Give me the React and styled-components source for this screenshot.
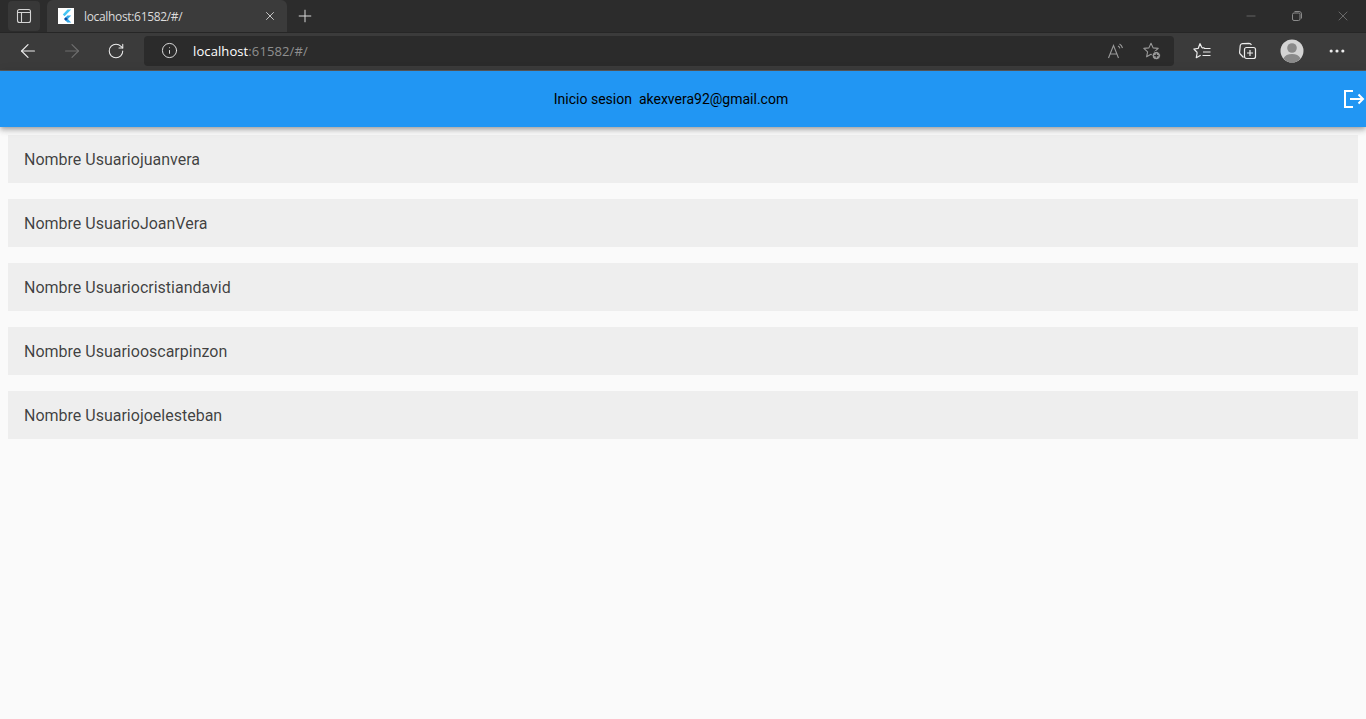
import React from 'react';
import styled, { createGlobalStyle } from 'styled-components';
import { X, Plus, Minus, ArrowLeft, ArrowRight, RotateCw, Info, MoreHorizontal } from 'lucide-react';

const Global = createGlobalStyle`
  html, body { margin: 0; padding: 0; height: 100%; background: #fafafa; overflow: hidden; }
  #root { height: 719px; }
  * { box-sizing: border-box; }
`;
const Page = styled.div`
  display: flex; flex-direction: column; width: 1366px; height: 719px; background: #fafafa;
  font-family: Roboto, sans-serif;
`;
const TitleBar = styled.div`
  display: flex; align-items: flex-end; height: 32px; background: #2c2c2c; padding-left: 8px; color: #ccc;
`;
const TabSwitch = styled.div`
  display: flex; align-items: center; justify-content: center; width: 32px; height: 30px; margin-bottom: 1px;
  background: #383838; border-radius: 4px;
`;
const Tab = styled.div`
  display: flex; align-items: center; width: 240px; height: 32px; margin-left: 7px; padding-left: 11px;
  background: #3b3b3b; border-radius: 6px 6px 0 0;
`;
const Favicon = styled.div`
  display: flex; align-items: center; justify-content: center; width: 16px; height: 16px; background: #fff; flex: none;
`;
const TabTitle = styled.span`
  margin-left: 10px; font: 12px "Open Sans", sans-serif; letter-spacing: -0.33px; color: #dcdcdc; flex: 1; white-space: nowrap;
`;
const TabClose = styled.div`display: flex; margin-right: 10px; color: #d0d0d0;`;
const NewTab = styled.div`display: flex; margin-left: 8px; color: #d8d8d8;`;
const WindowButtons = styled.div`
  display: flex; align-items: center; margin-left: auto; height: 32px; color: #8a8a8a;
`;
const WindowButton = styled.div`
  display: flex; align-items: center; justify-content: center; width: 46px; height: 32px;
`;
const NavBar = styled.div`
  display: flex; align-items: center; height: 38px; background: #3b3b3b; padding: 0 0 2px 10px;
  border-top: 1px solid #262626;
`;
const NavButton = styled.div`
  display: flex; align-items: center; justify-content: center; width: 36px; height: 32px; margin-right: 8px;
  color: ${p => (p.$dim ? '#6e6e6e' : '#ececec')};
`;
const AddressBar = styled.div`
  display: flex; align-items: center; width: 1030px; height: 30px; margin-left: 2px; padding: 0 4px 0 17px;
  background: #2b2b2b; border-radius: 4px; color: #e8e8e8;
`;
const Url = styled.span`
  margin-left: 15px; font: 13px "Open Sans", sans-serif; letter-spacing: 0.1px; color: #8f8f8f; flex: 1;
  b { font-weight: 400; color: #fff; }
`;
const AddressIcon = styled.div`
  display: flex; align-items: center; justify-content: center; width: 36px; color: #9a9a9a;
`;
const Tools = styled.div`display: flex; align-items: center; margin-left: 5px; color: #ececec;`;
const Tool = styled.div`display: flex; align-items: center; justify-content: center; width: 45px; height: 32px;`;
const Shade = styled.div`height: 1px; background: #5a5a5a;`;
const AppBar = styled.header`
  position: relative; z-index: 1; display: flex; align-items: center; height: 56px;
  background: #2196f3; color: #000; font-size: 14px;
  box-shadow: 0 2px 4px -1px rgba(0,0,0,.2), 0 4px 5px 0 rgba(0,0,0,.14), 0 1px 10px 0 rgba(0,0,0,.12);
`;
const AppTitle = styled.div`
  flex: 1; text-align: center; white-space: pre;
`;
const Logout = styled.div`
  display: flex; width: 24px; height: 24px; flex: none;
`;
const List = styled.main`
  display: flex; flex-direction: column; gap: 16px; padding: 8px;
`;
const Row = styled.div`
  display: flex; align-items: center; height: 48px; padding: 0 16px; background: #eeeeee;
  color: rgba(0,0,0,.74); font-size: 16px;
`;

const users = ['juanvera', 'JoanVera', 'cristiandavid', 'oscarpinzon', 'joelesteban'];

export default function App() {
  return (
    <Page>
      <Global />
      <TitleBar>
        <TabSwitch>
          <svg width="16" height="16" viewBox="0 0 16 16" fill="none" stroke="#d4d4d4" strokeWidth="1.1">
            <rect x="1.5" y="1.5" width="13" height="13" rx="2" />
            <path d="M1.5 4.5h13M5.5 4.5v10" />
          </svg>
        </TabSwitch>
        <Tab>
          <Favicon>
            <svg width="12" height="14" viewBox="0 0 12 14">
              <path d="M7.5 0.5h3.7L4.6 7.2 2.8 5.4z" fill="#45c5f3" />
              <path d="M7.4 6.5h3.8L7.9 9.9l3.3 3.6H7.4L4.1 9.9z" fill="#35a9e8" />
              <path d="M5.8 8.2l1.9 1.8-1.9 1.7-1.7-1.8z" fill="#0d47a1" />
            </svg>
          </Favicon>
          <TabTitle>localhost:61582/#/</TabTitle>
          <TabClose><X size={14} strokeWidth={1.6} /></TabClose>
        </Tab>
        <NewTab><Plus size={20} strokeWidth={1.2} style={{ marginBottom: 6 }} /></NewTab>
        <WindowButtons>
          <WindowButton><Minus size={14} strokeWidth={1} /></WindowButton>
          <WindowButton>
            <svg width="12" height="12" viewBox="0 0 12 12" fill="none" stroke="#8a8a8a">
              <rect x="1.5" y="3" width="7.5" height="7.5" rx="1.5" />
              <path d="M3.5 1.5h4.5a2.5 2.5 0 0 1 2.5 2.5v4.5" />
            </svg>
          </WindowButton>
          <WindowButton><X size={16} strokeWidth={1} /></WindowButton>
        </WindowButtons>
      </TitleBar>
      <NavBar>
        <NavButton><ArrowLeft size={22} strokeWidth={1.3} /></NavButton>
        <NavButton $dim><ArrowRight size={22} strokeWidth={1.3} /></NavButton>
        <NavButton><RotateCw size={18} strokeWidth={1.4} /></NavButton>
        <AddressBar>
          <Info size={17} strokeWidth={1.3} />
          <Url><b>localhost</b>:61582/#/</Url>
          <AddressIcon>
            <svg width="18" height="18" viewBox="0 0 18 18" fill="none" stroke="currentColor" strokeWidth="1.1">
              <path d="M1.5 16L6.5 3.5 11.5 16M3.3 12h6.4M11 4c1 .5 1.6 1.2 1.9 2.4M12.5 2c1.6.8 2.5 2.2 3 4" />
            </svg>
          </AddressIcon>
          <AddressIcon>
            <svg width="20" height="20" viewBox="0 0 20 20" fill="none">
              <path d="M9 2.2l2.1 4.7 5.1.5-3.8 3.4 1.1 5-4.5-2.6-4.4 2.6 1-5L1.8 7.4l5.1-.5z" stroke="currentColor" strokeWidth="1.1" strokeLinejoin="round" />
              <circle cx="14.3" cy="14.6" r="4.2" fill="currentColor" stroke="#2b2b2b" strokeWidth="1" />
              <path d="M14.3 12.5v4.2M12.2 14.600h4.200" stroke="#2b2b2b" strokeWidth="1.1" />
            </svg>
          </AddressIcon>
        </AddressBar>
        <Tools>
          <Tool>
            <svg width="20" height="20" viewBox="0 0 20 20" fill="none" stroke="currentColor" strokeWidth="1.2">
              <path d="M8 2.5l1.9 4.3M9.9 6.800h2.600M5.2 11.5L1.900 8l4.400-.7L8 2.500M5.200 11.500l-.9 5.200 4.400-2.400" strokeLinejoin="round" />
              <path d="M12 7.500h6.500M11 11h7.500M10.500 14.500h8" />
            </svg>
          </Tool>
          <Tool>
            <svg width="20" height="20" viewBox="0 0 20 20" fill="none" stroke="currentColor" strokeWidth="1.2">
              <path d="M6.500 16.500L3.200 13a2 2 0 0 1-.6-1.600l.6-6.500A2.500 2.500 0 0 1 6 2.600l6-.3c1.200 0 2 .6 2.400 1.700" />
              <rect x="7.500" y="6.500" width="11" height="11" rx="2" />
              <path d="M13 9v6M10 12h6" />
            </svg>
          </Tool>
          <Tool>
            <svg width="24" height="24" viewBox="0 0 24 24">
              <circle cx="12" cy="12" r="11.500" fill="#d4d4d4" />
              <circle cx="12" cy="9" r="4.800" fill="#8a8a8a" />
              <path d="M3.400 19.500C5 16.200 8 15 12 15s7 1.200 8.600 4.500A11.400 11.400 0 0 1 12 23.500a11.400 11.400 0 0 1-8.600-4z" fill="#8a8a8a" />
            </svg>
          </Tool>
          <Tool><MoreHorizontal size={20} strokeWidth={1.8} /></Tool>
        </Tools>
      </NavBar>
      <Shade />
      <AppBar>
        <AppTitle>{'Inicio sesion  akexvera92@gmail.com'}</AppTitle>
        <Logout>
          <svg width="24" height="24" viewBox="0 0 24 24" fill="none" stroke="#fff" strokeWidth="2">
            <path d="M11 4H3v16h8M8 12h13M16.500 7.500L21 12l-4.500 4.500" />
          </svg>
        </Logout>
      </AppBar>
      <List>
        {users.map(u => <Row key={u}>Nombre Usuario{u}</Row>)}
      </List>
    </Page>
  );
}
